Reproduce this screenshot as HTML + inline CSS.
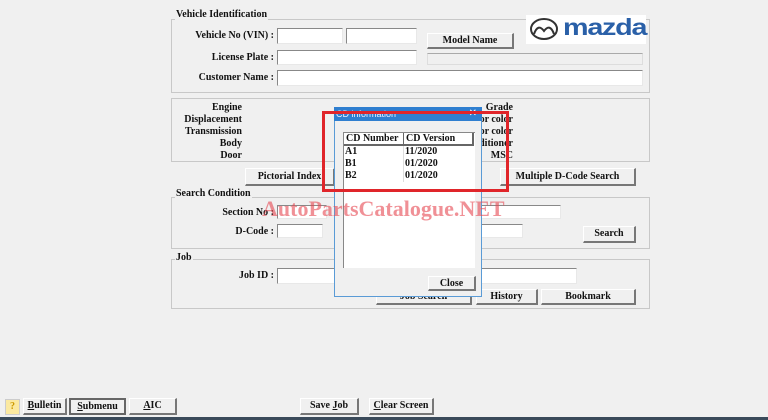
<!DOCTYPE html>
<html><head><meta charset="utf-8"><style>
*{margin:0;padding:0;box-sizing:border-box}
body{width:768px;height:420px;background:#f0f0f0;position:relative;overflow:hidden;font-family:"Liberation Serif",serif;font-size:10px;font-weight:bold;color:#111}
.a{position:absolute}
.g{position:absolute;border:1px solid #c8c8c8}
.gl{position:absolute;background:#f0f0f0;padding:0 1px;font-size:10px}
.in{position:absolute;background:#fff;border-top:1px solid #888;border-left:1px solid #888;border-bottom:1px solid #e8e8e8;border-right:1px solid #e8e8e8}
.b{position:absolute;background:#f0f0f0;border:1px solid #fff;border-right:2px solid #777;border-bottom:2px solid #777;text-align:center;font-size:10px;line-height:13px}
.r{position:absolute;text-align:right;white-space:nowrap}
</style></head><body>
<div class="g" style="left:171px;top:19px;width:479px;height:74px"></div>
<div class="gl" style="left:175px;top:9px">Vehicle Identification</div>
<div class="r" style="right:494px;top:30px">Vehicle No (VIN) :</div>
<div class="in" style="left:277px;top:28px;width:66px;height:16px"></div>
<div class="in" style="left:346px;top:28px;width:71px;height:16px"></div>
<div class="b" style="left:427px;top:33px;width:87px;height:16px">Model Name</div>
<div class="a" style="left:526px;top:15px;width:120px;height:29px;background:#fff"></div>
<svg class="a" style="left:529px;top:17px" width="30" height="24" viewBox="0 0 30 24"><ellipse cx="15" cy="12" rx="13" ry="10" fill="none" stroke="#333" stroke-width="2"/><path d="M5 17 Q9 6 15 14 Q21 6 25 17" fill="none" stroke="#333" stroke-width="2"/></svg>
<div class="a" style="left:563px;top:14px;font-family:'Liberation Sans',sans-serif;font-size:23px;font-weight:900;color:#2a60a8;letter-spacing:-1px;transform:scaleX(1.25);transform-origin:left">mazda</div>
<div class="r" style="right:494px;top:52px">License Plate :</div>
<div class="in" style="left:277px;top:50px;width:140px;height:15px"></div>
<div class="a" style="left:427px;top:53px;width:216px;height:12px;border:1px solid #ddd;border-top-color:#aaa"></div>
<div class="r" style="right:494px;top:72px">Customer Name :</div>
<div class="in" style="left:277px;top:70px;width:366px;height:16px"></div>

<div class="g" style="left:171px;top:98px;width:479px;height:64px"></div>
<div class="r" style="right:526px;top:102px;line-height:12px">Engine<br>Displacement<br>Transmission<br>Body<br>Door</div>
<div class="r" style="right:255px;top:102px;line-height:12px">Grade<br>or color<br>or color<br>ditioner<br>MSC</div>
<div class="b" style="left:245px;top:168px;width:90px;height:18px;line-height:15px">Pictorial Index</div>
<div class="b" style="left:500px;top:168px;width:136px;height:18px;line-height:15px">Multiple D-Code Search</div>

<div class="g" style="left:171px;top:197px;width:479px;height:52px"></div>
<div class="gl" style="left:175px;top:188px">Search Condition</div>
<div class="r" style="right:494px;top:207px">Section No :</div>
<div class="in" style="left:277px;top:205px;width:50px;height:14px"></div>
<div class="in" style="left:480px;top:205px;width:81px;height:14px"></div>
<div class="r" style="right:494px;top:226px">D-Code :</div>
<div class="in" style="left:277px;top:224px;width:46px;height:14px"></div>
<div class="in" style="left:480px;top:224px;width:43px;height:14px"></div>
<div class="b" style="left:583px;top:226px;width:53px;height:17px">Search</div>

<div class="g" style="left:171px;top:259px;width:479px;height:50px"></div>
<div class="gl" style="left:175px;top:252px">Job</div>
<div class="r" style="right:494px;top:270px">Job ID :</div>
<div class="in" style="left:277px;top:268px;width:60px;height:16px"></div>
<div class="in" style="left:480px;top:268px;width:97px;height:16px"></div>
<div class="b" style="left:376px;top:289px;width:96px;height:16px">Job Search</div>
<div class="b" style="left:476px;top:289px;width:62px;height:16px">History</div>
<div class="b" style="left:541px;top:289px;width:95px;height:16px">Bookmark</div>

<!-- dialog -->
<div class="a" style="left:334px;top:107px;width:148px;height:190px;background:#f0f0f0;border:1px solid #5a9bd6"></div>
<div class="a" style="left:334px;top:107px;width:148px;height:14px;background:#2f7fd0;color:#e8f0ff;font-family:'Liberation Sans',sans-serif;font-weight:normal;font-size:9px;line-height:14px;padding-left:2px;white-space:nowrap">CD information<span style="position:absolute;right:5px;top:0;font-size:10px;color:#fff">✕</span></div>
<div class="a" style="left:343px;top:132px;width:132px;height:136px;background:#fff;border-left:1px solid #888;border-top:1px solid #888"></div>
<div class="a" style="left:344px;top:133px;width:130px;height:13px;border-bottom:2px solid #666;border-right:2px solid #666;font-size:10px;line-height:12px"><span style="position:absolute;left:2px">CD Number</span><span style="position:absolute;left:59px;top:0;height:12px;border-left:1px solid #666;padding-left:2px">CD Version</span></div>
<div class="a" style="left:345px;top:146px;line-height:12px">A1<br>B1<br>B2</div>
<div class="a" style="left:405px;top:146px;line-height:12px">11/2020<br>01/2020<br>01/2020</div>
<div class="a" style="left:403px;top:146px;width:1px;height:36px;background:#ddd"></div>
<div class="b" style="left:428px;top:276px;width:48px;height:15px">Close</div>

<div class="a" style="left:322px;top:111px;width:187px;height:81px;border:3px solid #e0252a"></div>
<div class="a" style="left:262px;top:196px;font-size:22px;font-weight:bold;color:rgba(230,70,80,0.6);white-space:nowrap">AutoPartsCatalogue.NET</div>

<div class="a" style="left:5px;top:399px;width:15px;height:16px;background:#fbe9a0;border:1px solid #ccc;color:#c90;text-align:center;line-height:14px">?</div>
<div class="b" style="left:23px;top:398px;width:44px;height:17px"><u>B</u>ulletin</div>
<div class="b" style="left:69px;top:398px;width:57px;height:17px;border:2px solid #666"><u>S</u>ubmenu</div>
<div class="b" style="left:129px;top:398px;width:48px;height:17px"><u>A</u>IC</div>
<div class="b" style="left:300px;top:398px;width:59px;height:17px">Save <u>J</u>ob</div>
<div class="b" style="left:369px;top:398px;width:65px;height:17px"><u>C</u>lear Screen</div>
<div class="a" style="left:0;top:417px;width:768px;height:3px;background:#3a4a5a"></div>
</body></html>
